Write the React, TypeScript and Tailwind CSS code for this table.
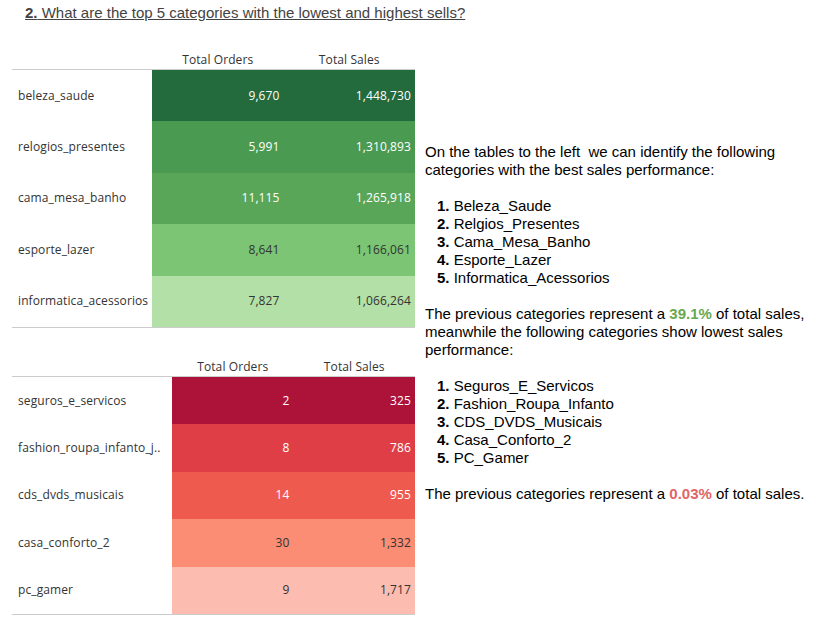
import React from "react"

type Row = { name: string; orders: string; sales: string; bg: string; dark: boolean }

const best: Row[] = [
	{ name: "beleza_saude", orders: "9,670", sales: "1,448,730", bg: "bg-[#236a3d]", dark: true },
	{ name: "relogios_presentes", orders: "5,991", sales: "1,310,893", bg: "bg-[#4a9a52]", dark: true },
	{ name: "cama_mesa_banho", orders: "11,115", sales: "1,265,918", bg: "bg-[#5aa659]", dark: true },
	{ name: "esporte_lazer", orders: "8,641", sales: "1,166,061", bg: "bg-[#7cc574]", dark: false },
	{ name: "informatica_acessorios", orders: "7,827", sales: "1,066,264", bg: "bg-[#b3e0a7]", dark: false },
]

const worst: Row[] = [
	{ name: "seguros_e_servicos", orders: "2", sales: "325", bg: "bg-[#ad1238]", dark: true },
	{ name: "fashion_roupa_infanto_j..", orders: "8", sales: "786", bg: "bg-[#e03e47]", dark: true },
	{ name: "cds_dvds_musicais", orders: "14", sales: "955", bg: "bg-[#ef5a4f]", dark: true },
	{ name: "casa_conforto_2", orders: "30", sales: "1,332", bg: "bg-[#fb8d74]", dark: false },
	{ name: "pc_gamer", orders: "9", sales: "1,717", bg: "bg-[#fdbcb0]", dark: false },
]

const Table = ({ rows, labelW, rowH }: { rows: Row[]; labelW: string; rowH: string }) => {
	return (
		<div className="w-[403px] font-['Open_Sans',sans-serif] text-[12px] tracking-[0.1px]">
			<div className="flex h-[19px] items-end pb-[1px] leading-[16px] border-b border-[#cccccc] text-[#333]">
				<div className={labelW}></div>
				<div className="flex-1 text-center">Total Orders</div>
				<div className="flex-1 text-center">Total Sales</div>
			</div>
			{rows.map((r) => (
				<div key={r.name} className={`flex ${rowH} items-center`}>
					<div className={`${labelW} pl-[6px] text-[#333] whitespace-nowrap`}>{r.name}</div>
					<div className={`flex flex-1 self-stretch ${r.bg} ${r.dark ? "text-white" : "text-[#333]"}`}>
						<div className="flex flex-1 items-center justify-end pr-[4px]">{r.orders}</div>
						<div className="flex flex-1 items-center justify-end pr-[4px]">{r.sales}</div>
					</div>
				</div>
			))}
			<div className="h-px bg-[#cccccc]"></div>
		</div>
	)
}

const App = () => {
	return (
		<div className="w-[840px] h-[635px] bg-white relative overflow-hidden font-['Liberation_Sans',Arial,sans-serif]">
			<div className="pl-[25px] pt-[4px] text-[15px] leading-[18px] text-[#434343] underline">
				<span className="font-bold">2.</span> What are the top 5 categories with the lowest and highest sells?
			</div>
			<div className="flex pl-[12px] pt-[29px]">
				<div className="flex flex-col">
					<Table rows={best} labelW="w-[140px]" rowH="h-[51.4px]" />
					<div className="h-[30px]"></div>
					<Table rows={worst} labelW="w-[160px]" rowH="h-[47.4px]" />
				</div>
				<div className="pl-[10px] pt-[92px] text-[15px] leading-[18px] text-[#000]">
					<p>On the tables to the left &nbsp;we can identify the following<br />categories with the best sales performance:</p>
					<ol className="mt-[18px] pl-[12px]">
						{["Beleza_Saude", "Relgios_Presentes", "Cama_Mesa_Banho", "Esporte_Lazer", "Informatica_Acessorios"].map((t, i) => (
							<li key={t}><span className="font-bold">{i + 1}.</span> {t}</li>
						))}
					</ol>
					<p className="mt-[18px]">
						The previous categories represent a <span className="font-bold text-[#6aa84f]">39.1%</span> of total sales,<br />meanwhile the following categories show lowest sales<br />performance:
					</p>
					<ol className="mt-[18px] pl-[12px]">
						{["Seguros_E_Servicos", "Fashion_Roupa_Infanto", "CDS_DVDS_Musicais", "Casa_Conforto_2", "PC_Gamer"].map((t, i) => (
							<li key={t}><span className="font-bold">{i + 1}.</span> {t}</li>
						))}
					</ol>
					<p className="mt-[18px]">
						The previous categories represent a <span className="font-bold text-[#e06666]">0.03%</span> of total sales.
					</p>
				</div>
			</div>
		</div>
	)
}

export default App
